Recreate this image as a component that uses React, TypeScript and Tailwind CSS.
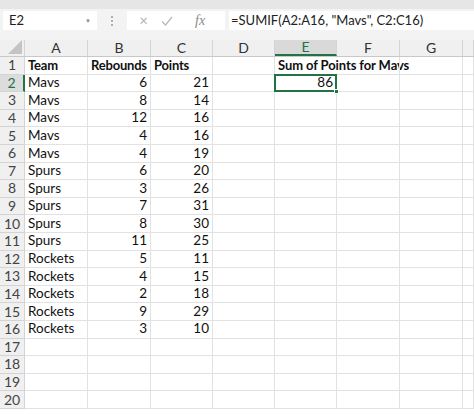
import React from "react";

const cols = ["A", "B", "C", "D", "E", "F", "G", ""];

const rows: (string | number)[][] = [
  ["Team", "Rebounds", "Points"],
  ["Mavs", 6, 21],
  ["Mavs", 8, 14],
  ["Mavs", 12, 16],
  ["Mavs", 4, 16],
  ["Mavs", 4, 19],
  ["Spurs", 6, 20],
  ["Spurs", 3, 26],
  ["Spurs", 7, 31],
  ["Spurs", 8, 30],
  ["Spurs", 11, 25],
  ["Rockets", 5, 11],
  ["Rockets", 4, 15],
  ["Rockets", 2, 18],
  ["Rockets", 9, 29],
  ["Rockets", 3, 10],
  [],
  [],
  [],
  [],
];

const grid = "grid grid-cols-[25px_63px_63px_62px_62px_62px_63px_63px_1fr]";

function FormulaBar() {
  return (
    <div className="flex flex-col bg-[#f3f3f3] leading-none">
      <div className="h-[9px] bg-[#e6e6e6]" />
      <div className="flex items-center h-[21px] mt-[1px] pl-[3px] pr-0">
        <div className="flex items-center justify-between w-[94px] h-[19px] bg-white pl-[6px] pr-[6px] text-[13px] text-[#222]">
          <span>E2</span>
          <span className="text-[6px] text-[#888]">▼</span>
        </div>
        <div className="w-[30px] flex justify-center">
          <div className="flex flex-col gap-[2px]">
            <div className="w-[2px] h-[2px] bg-[#b0b0b0]" />
            <div className="w-[2px] h-[2px] bg-[#b0b0b0]" />
            <div className="w-[2px] h-[2px] bg-[#b0b0b0]" />
          </div>
        </div>
        <div className="flex items-center w-[98px] h-[19px] bg-white text-[#b4b4b4]">
          <span className="w-[33px] text-center text-[15px] leading-none">×</span>
          <svg width="14" height="12" viewBox="0 0 14 12">
            <path d="M2 6.5 L5.5 10 L12 2" fill="none" stroke="#b8b8b8" strokeWidth="1.2" />
          </svg>
          <span className="ml-[21px] italic font-['Liberation_Serif',serif] text-[14px] text-[#8a8a8a]">fx</span>
        </div>
        <div className="flex items-center flex-1 h-[19px] bg-white ml-[4px] pl-[2px] text-[13px] text-[#222] whitespace-nowrap">
          =SUMIF(A2:A16, "Mavs", C2:C16)
        </div>
      </div>
      <div className="h-[9px]" />
    </div>
  );
}

function HeaderRow() {
  return (
    <div className={`${grid} h-[17px] bg-[#f0f0f0] border-b border-[#c8c8c8] leading-none`}>
      <div className="relative border-r border-[#d4d4d4]">
        <svg className="absolute right-[2px] bottom-[2px]" width="14" height="14" viewBox="0 0 14 14">
          <polygon points="14,0 14,14 0,14" fill="#c4c4c4" />
        </svg>
      </div>
      {cols.map((c, i) => (
        <div
          key={i}
          className={
            c === "E"
              ? "flex items-center justify-center border-r border-[#d4d4d4] bg-[#d9d9d9] text-[#217346] border-b-2 border-b-[#217346] text-[14px]"
              : "flex items-center justify-center border-r border-[#d4d4d4] text-[#333] text-[14px]"
          }
        >
          {c}
        </div>
      ))}
    </div>
  );
}

export default function App() {
  return (
    <div className="w-[474px] h-[414px] overflow-hidden bg-white font-['Lato','Open_Sans',sans-serif]">
      <FormulaBar />
      <HeaderRow />
      {rows.map((r, ri) => {
        const n = ri + 1;
        return (
          <div key={ri} className={`${grid} h-[17.6px] text-[13.5px] leading-none`}>
            <div
              className={
                n === 2
                  ? "flex items-center justify-center bg-[#dcdcdc] text-[#217346] text-[14px] border-b border-[#d4d4d4] border-r-2 border-r-[#217346]"
                  : "flex items-center justify-center bg-[#f0f0f0] text-[#444] text-[14px] border-b border-r border-[#d4d4d4]"
              }
            >
              {n}
            </div>
            {cols.map((c, ci) => {
              const v = r[ci];
              const isNum = typeof v === "number";
              const bold = n === 1;
              if (c === "E" && n === 1) {
                return (
                  <div key={ci} className="flex items-center pl-[3px] border-b border-[#e2e2e2]">
                    <span className="whitespace-nowrap font-bold text-[13px] tracking-[-0.1px] text-[#111]">
                      Sum of Points for Mavs
                    </span>
                  </div>
                );
              }
              if (c === "E" && n === 2) {
                return (
                  <div
                    key={ci}
                    className="relative flex items-center justify-end pr-[3px] border-b border-r border-[#e2e2e2] text-[#111]"
                  >
                    86
                    <div className="absolute -left-[1px] -top-[1px] -right-[1px] -bottom-[1px] border-2 border-[#217346]" />
                    <div className="absolute -right-[3px] -bottom-[3px] w-[5px] h-[5px] bg-[#217346] border border-white" />
                  </div>
                );
              }
              if (c === "F" && n === 1) {
                return <div key={ci} className="border-b border-r border-[#e2e2e2]" />;
              }
              return (
                <div
                  key={ci}
                  className={`flex items-center whitespace-nowrap border-b border-r border-[#e2e2e2] text-[#111] ${
                    isNum ? "justify-end pr-[3px]" : "justify-start pl-[3px]"
                  } ${bold ? "font-bold text-[13px] tracking-[-0.2px]" : ""}`}
                >
                  {v ?? ""}
                </div>
              );
            })}
          </div>
        );
      })}
    </div>
  );
}
